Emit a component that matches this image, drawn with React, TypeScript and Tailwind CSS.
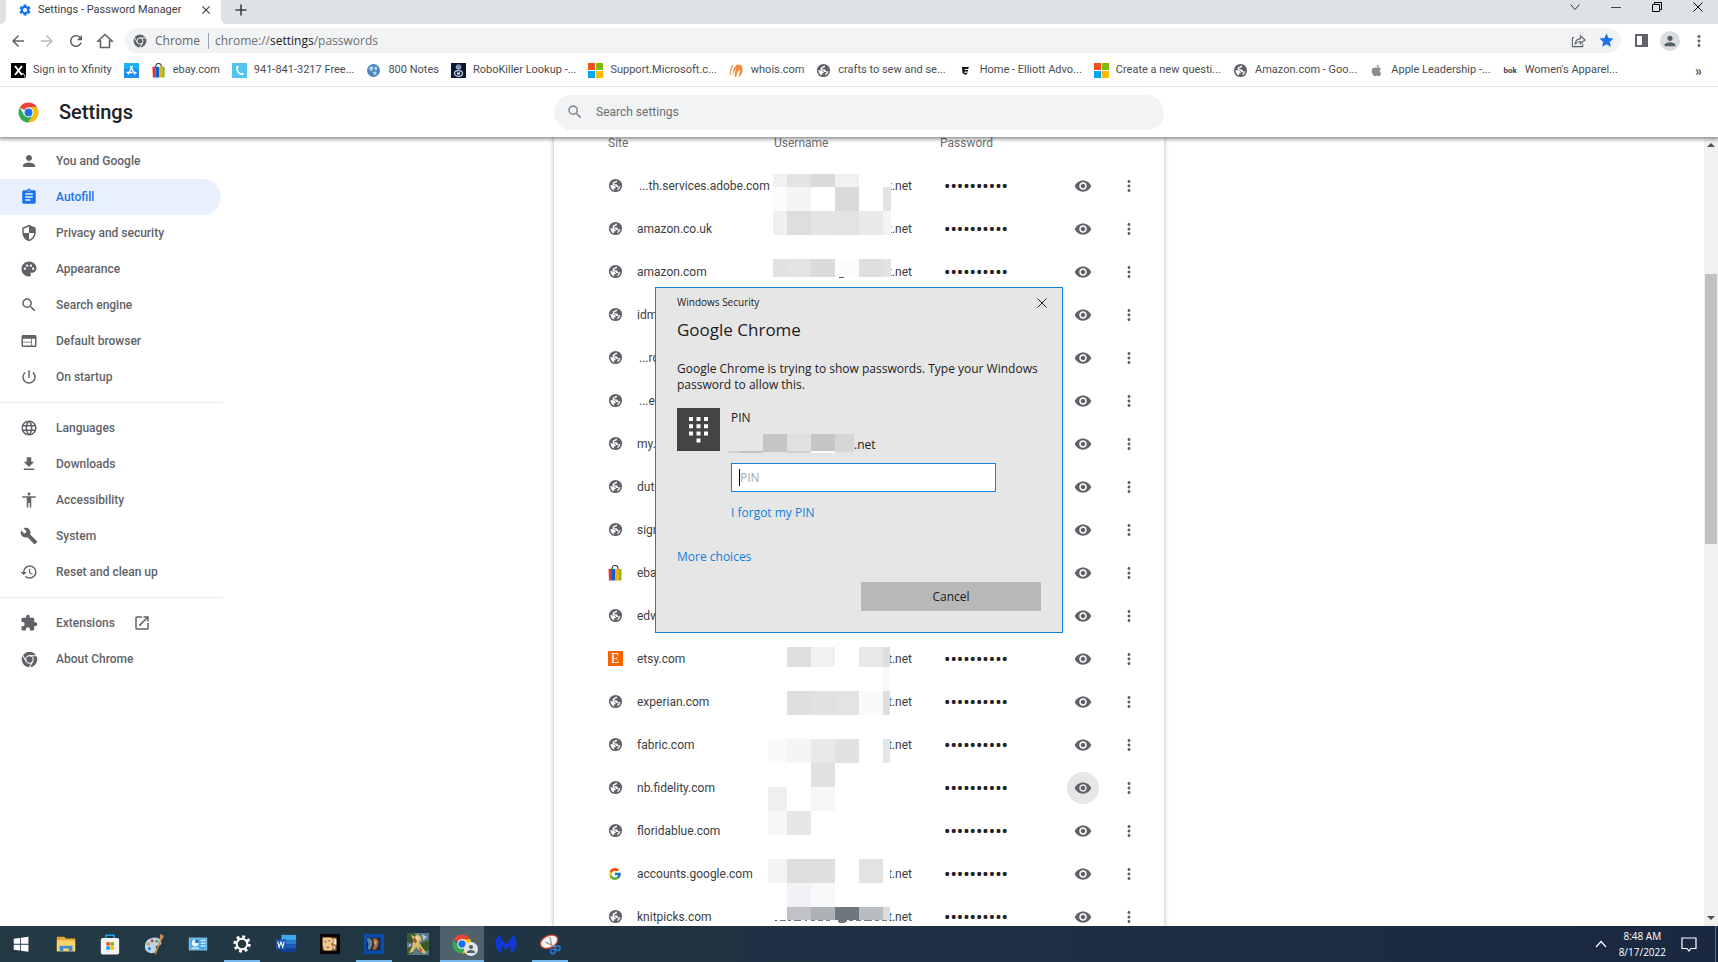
import type { ReactNode } from "react"
import {
  MdAccessibility, MdArrowBack, MdArrowForward, MdAssignment, MdBuild, MdClose, MdExtension,
  MdFileDownload, MdHistory, MdLanguage, MdMoreVert, MdOpenInNew, MdPalette, MdPerson,
  MdPowerSettingsNew, MdRefresh, MdSearch, MdSecurity, MdSettings, MdStar,
  MdVisibility, MdWeb,
} from "react-icons/md"
import { FaApple } from "react-icons/fa"
import { FcGoogle } from "react-icons/fc"

// ---------- icons ----------

function ChromeLogo({ className }: { className?: string }) {
  return (
    <svg viewBox="0 0 48 48" className={className} aria-hidden="true">
      <path d="M24 24 4.1 12.6A23 23 0 0 1 43.9 12.5H24z" fill="#ea4335" />
      <path d="M4.1 12.6A23 23 0 0 0 24 47l10-17.2-10-5.8-10 5.8z" fill="#34a853" />
      <path d="M43.9 12.5A23 23 0 0 1 24 47l10-17.2L24 12.5z" fill="#fbbc05" />
      <circle cx="24" cy="24" r="11.5" fill="#fff" />
      <circle cx="24" cy="24" r="9" fill="#1a73e8" />
    </svg>
  )
}

function ChromeMono({ className }: { className?: string }) {
  return (
    <svg viewBox="0 0 48 48" className={className} aria-hidden="true">
      <circle cx="24" cy="24" r="22" fill="currentColor" />
      <circle cx="24" cy="24" r="10.5" fill="none" stroke="#fff" strokeWidth="3" />
      <path d="M24 13.500h20M15 29.500 5 12.500M33 29.500 23 46.500" stroke="#fff" strokeWidth="3" fill="none" />
    </svg>
  )
}

function Globe({ className }: { className?: string }) {
  return (
    <svg viewBox="0 0 16 16" className={className} aria-hidden="true">
      <circle cx="8" cy="8" r="7" fill="#5f6368" />
      <path d="M2.600 7.400 6.500 8l1.800 1.500-.300 1.300-1.700.400.200 2.200Q2.800 12 2.600 7.400z" fill="#fff" />
      <path d="M8.600 2.700 9.800 3.400 9 4.900 6.800 5.300l-.2 1.300 3.100.4 1.200 2 2.400-.2Q12.800 12 9.800 13.100l.4-1.800 1.700-1.100-2.900-.6L7.600 8 5 7.400l.1-2.600 2-.8z" fill="#fff" />
    </svg>
  )
}

function EbayBag({ className }: { className?: string }) {
  return (
    <svg viewBox="0 0 16 16" className={className} aria-hidden="true">
      <path d="M5 5V3.500a3 3 0 0 1 6 0V5" fill="none" stroke="#444" strokeWidth="1.200" />
      <path d="M1.500 4H5v11.500H2z" fill="#e53238" />
      <path d="M5 4h3.500v11.500H5z" fill="#0064d2" />
      <path d="M8.500 4H12v11.500H8.500z" fill="#f5af02" />
      <path d="M12 4h2.500v11.500H12z" fill="#86b817" />
    </svg>
  )
}

function MsLogo({ className }: { className?: string }) {
  return (
    <svg viewBox="0 0 15 15" className={className} aria-hidden="true">
      <path d="M0 0h7v7H0z" fill="#f25022" />
      <path d="M8 0h7v7H8z" fill="#7fba00" />
      <path d="M0 8h7v7H0z" fill="#00a4ef" />
      <path d="M8 8h7v7H8z" fill="#ffb900" />
    </svg>
  )
}

function XfinityIcon() {
  return (
    <svg viewBox="0 0 15 15" className="size-[15px]" aria-hidden="true">
      <path d="M0 0h15v15H0z" fill="#000" />
      <path d="M4 3l7 9M11 3l-7 9" stroke="#fff" strokeWidth="2" />
      <path d="M9 10.500h3.500L14.500 15" stroke="#fff" strokeWidth=".8" fill="none" />
    </svg>
  )
}

function AppStoreIcon() {
  return (
    <svg viewBox="0 0 15 15" className="size-[15px]" aria-hidden="true">
      <path d="M0 0h15v15H0z" fill="#1d8df3" />
      <path d="M0 0h15v6H0z" fill="#1db1f8" />
      <path d="M8.500 3 4 11.500M6.500 3 11 11.500M2.500 9.500h6M10 9.500h2.500" stroke="#fff" strokeWidth="1.400" />
    </svg>
  )
}

function PhoneIcon() {
  return (
    <svg viewBox="0 0 15 15" className="size-[15px]" aria-hidden="true">
      <path d="M0 0h15v15H0z" fill="#55c3f0" />
      <path d="M5 3.500C4 7.500 6.500 11 10.500 11.800" stroke="#fff" strokeWidth="1.600" fill="none" />
      <path d="M4.500 3h2v2.500h-2zM9 10h2.500v2H9z" fill="#fff" />
    </svg>
  )
}

function NotesIcon() {
  return (
    <svg viewBox="0 0 15 15" className="size-[15px]" aria-hidden="true">
      <circle cx="7.500" cy="7.500" r="6.500" fill="#4a86bd" />
      <path d="M3 4.500 6 3l1.500 2L6 8 3.500 7zM8.500 3.500l3 1-1 3-2-1zM6.500 9l3-.500 1.500 1.500-2.500 2.500z" fill="#b7d6ef" />
    </svg>
  )
}

function RoboIcon() {
  return (
    <svg viewBox="0 0 15 15" className="size-[15px]" aria-hidden="true">
      <path d="M0 0h15v15H0z" fill="#0c1633" />
      <path d="M5.500 2.500h4v3.500h-4z" fill="#7f95b8" />
      <circle cx="7.500" cy="4" r="2.300" fill="none" stroke="#b9cbe4" strokeWidth=".8" />
      <ellipse cx="7.500" cy="10.500" rx="4" ry="2.800" fill="none" stroke="#b9cbe4" strokeWidth="1.300" />
      <path d="M6 9.500h3v2H6z" fill="#e6eefa" />
    </svg>
  )
}

function WhoisIcon() {
  return (
    <svg viewBox="0 0 15 15" className="size-[15px]" aria-hidden="true">
      <path d="M1.500 12Q1 6 4 2" stroke="#f0a050" strokeWidth="1.300" fill="none" />
      <path d="M3.500 13Q4 4 8 1.500L12 2q2.500 4 1 8-1 3-4 4 2.500-4 1.500-7Q8 8 7.500 13q-1 1.500-2 .5Q6 8 7.500 5 5 8 3.500 13z" fill="#f08a3c" />
    </svg>
  )
}

function ShieldE() {
  return (
    <svg viewBox="0 0 15 15" className="size-[15px]" aria-hidden="true">
      <path d="M4 4h7l-1 2H6.500v1H10v1.500H6.500V10l3.500-.500-2.500 2.500L4.500 10z" fill="#111" />
    </svg>
  )
}

// ---------- data ----------

interface Bookmark {
  label: string
  icon: ReactNode
}

const globe = <Globe className="size-[15px]" />

const bookmarks: Bookmark[] = [
  { label: "Sign in to Xfinity", icon: <XfinityIcon /> },
  { label: "", icon: <AppStoreIcon /> },
  { label: "ebay.com", icon: <EbayBag className="size-[15px]" /> },
  { label: "941-841-3217 Free...", icon: <PhoneIcon /> },
  { label: "800 Notes", icon: <NotesIcon /> },
  { label: "RoboKiller Lookup -...", icon: <RoboIcon /> },
  { label: "Support.Microsoft.c...", icon: <MsLogo className="size-[15px]" /> },
  { label: "whois.com", icon: <WhoisIcon /> },
  { label: "crafts to sew and se...", icon: globe },
  { label: "Home - Elliott Advo...", icon: <ShieldE /> },
  { label: "Create a new questi...", icon: <MsLogo className="size-[15px]" /> },
  { label: "Amazon.com - Goo...", icon: globe },
  { label: "Apple Leadership -...", icon: <FaApple className="size-[13px] text-[#8a8d91]" /> },
  { label: "Women's Apparel...", icon: <span className="text-[8px] font-bold text-gray-700">bok</span> },
]

const menuIcon = "size-[18px]"

const menuGroups = [
  [
    { label: "You and Google", icon: <MdPerson className={menuIcon} /> },
    { label: "Autofill", icon: <MdAssignment className={menuIcon} />, active: true },
    { label: "Privacy and security", icon: <MdSecurity className={menuIcon} /> },
    { label: "Appearance", icon: <MdPalette className={menuIcon} /> },
    { label: "Search engine", icon: <MdSearch className={menuIcon} /> },
    { label: "Default browser", icon: <MdWeb className={menuIcon} /> },
    { label: "On startup", icon: <MdPowerSettingsNew className={menuIcon} /> },
  ],
  [
    { label: "Languages", icon: <MdLanguage className={menuIcon} /> },
    { label: "Downloads", icon: <MdFileDownload className={menuIcon} /> },
    { label: "Accessibility", icon: <MdAccessibility className={menuIcon} /> },
    { label: "System", icon: <MdBuild className={menuIcon} /> },
    { label: "Reset and clean up", icon: <MdHistory className={menuIcon} /> },
  ],
  [
    { label: "Extensions", icon: <MdExtension className={menuIcon} />, external: true },
    { label: "About Chrome", icon: <ChromeMono className="size-[17px]" /> },
  ],
]

const siteGlobe = <Globe className="size-[15px]" />
const etsy = (
  <span className="flex size-[15px] items-center justify-center bg-[#f56400] font-['Liberation_Serif',serif] text-sm text-white">E</span>
)

const rows = [
  { site: "...th.services.adobe.com", user: "t.net" },
  { site: "amazon.co.uk", user: "t.net" },
  { site: "amazon.com", user: "t.net" },
  { site: "idm", user: "" },
  { site: "...ro", user: "" },
  { site: "...er", user: "" },
  { site: "my.", user: "" },
  { site: "dutc", user: "" },
  { site: "sign", user: "" },
  { site: "eba", user: "", icon: <EbayBag className="size-4" /> },
  { site: "edw", user: "" },
  { site: "etsy.com", user: "t.net", icon: etsy },
  { site: "experian.com", user: "t.net" },
  { site: "fabric.com", user: "t.net" },
  { site: "nb.fidelity.com", user: "", hover: true },
  { site: "floridablue.com", user: "" },
  { site: "accounts.google.com", user: "t.net", icon: <FcGoogle className="size-[14px]" /> },
  { site: "knitpicks.com", user: "t.net" },
]

// x, y, width, height, fill
type Block = [number, number, number, number, string]

const topBlocks: Block[] = [
  [5, 0, 14, 13, "#f1f1f1"], [19, 0, 24, 13, "#e3e3e3"], [43, 0, 24, 13, "#dadada"], [67, 0, 24, 13, "#f1f1f1"],
  [118, 0, 5, 13, "#ffffff"],
  [5, 13, 14, 24, "#fcfcfc"], [19, 13, 24, 24, "#f5f5f5"], [67, 13, 24, 24, "#dadada"], [115, 13, 8, 24, "#e3e3e3"],
  [5, 37, 14, 24, "#f0f0f0"], [19, 37, 24, 24, "#dedede"], [43, 37, 24, 24, "#e4e4e4"], [67, 37, 24, 24, "#e3e3e3"],
  [91, 37, 24, 24, "#e9e9e9"], [115, 37, 8, 24, "#f4f4f4"],
  [5, 85, 14, 18, "#e2e2e2"], [19, 85, 24, 18, "#e4e4e4"], [43, 85, 24, 18, "#dbdbdb"], [67, 85, 24, 18, "#fcfcfc"],
  [91, 85, 24, 18, "#dfdfdf"], [115, 85, 8, 18, "#e3e3e3"], [71, 103, 5, 1, "#555555"],
]

const bottomBlocks: Block[] = [
  [19, 0, 24, 20, "#dfdfdf"], [43, 0, 24, 20, "#f1f1f1"], [91, 0, 24, 20, "#e8e8e8"], [115, 0, 7, 20, "#dedede"],
  [115, 20, 7, 24, "#f9f9f9"],
  [19, 44, 24, 24, "#dfdfdf"], [43, 44, 24, 24, "#e1e1e1"], [67, 44, 24, 24, "#e3e3e3"], [91, 44, 24, 24, "#fafafa"],
  [115, 44, 7, 24, "#dfdfdf"],
  [0, 92, 19, 24, "#fafafa"], [19, 92, 24, 24, "#f5f5f5"], [43, 92, 24, 24, "#e9e9e9"], [67, 92, 24, 24, "#e2e2e2"],
  [115, 92, 7, 24, "#e6e6e6"],
  [43, 116, 24, 24, "#e1e1e1"],
  [0, 140, 19, 24, "#eef0f0"], [43, 140, 24, 24, "#f6f8f8"],
  [0, 164, 19, 24, "#f6f8f8"], [19, 164, 24, 24, "#e6e6e6"],
  [0, 212, 19, 24, "#f4f4f4"], [19, 212, 48, 24, "#dfdfdf"], [91, 212, 24, 24, "#e3e3e3"],
  [115, 212, 7, 24, "#ffffff"],
  [19, 236, 24, 24, "#f1f2f5"], [43, 236, 24, 24, "#f7f8f8"],
  [19, 260, 24, 13, "#c0c2c8"], [43, 260, 24, 13, "#adb1b4"], [67, 260, 24, 13, "#6d777f"], [91, 260, 24, 13, "#b9bdc0"],
  [115, 260, 7, 13, "#dcdcdc"],
  [7, 273, 2, 1, "#555555"], [12, 273, 6, 1, "#777777"], [20, 273, 3, 1, "#777777"], [26, 273, 7, 1, "#777777"],
  [37, 273, 2, 1, "#777777"], [43, 273, 4, 1, "#777777"], [50, 273, 5, 1, "#777777"], [58, 273, 4, 1, "#777777"],
  [70, 273, 9, 2, "#777777"], [71, 275, 6, 1, "#777777"], [81, 273, 4, 1, "#777777"], [88, 273, 5, 1, "#777777"],
  [96, 273, 8, 1, "#777777"], [107, 273, 4, 1, "#777777"], [114, 273, 5, 1, "#777777"],
]

const pinBlocks: Block[] = [
  [0, 17, 11, 2, "#d4d4d4"], [11, 17, 24, 2, "#c4c4c4"], [35, 0, 24, 18, "#c5c5c5"], [35, 18, 24, 1, "#dfe3e6"],
  [59, 0, 24, 17, "#e1e1e1"], [59, 17, 24, 2, "#d0d0d0"], [83, 0, 24, 17, "#c5c5c5"], [83, 17, 24, 2, "#ffffff"],
  [107, 0, 19, 18, "#d6d6d6"], [107, 18, 19, 1, "#dfe3e6"],
]

function Mosaic({ blocks, className }: { blocks: Block[]; className: string }) {
  return (
    <svg className={className} shapeRendering="crispEdges" aria-hidden="true">
      {blocks.map(([x, y, w, h, fill]) => (
        <rect key={`${x}-${y}`} x={x} y={y} width={w} height={h} fill={fill} />
      ))}
    </svg>
  )
}

// ---------- browser chrome ----------

function TabStrip() {
  return (
    <div className="flex h-6 items-stretch bg-white text-[#3c4043]">
      <div className="w-1.5 rounded-br-md bg-[#dee1e6]" />
      <div className="flex w-[215px] items-start pl-3 pr-2">
        <div className="flex h-5 w-full items-center">
          <MdSettings className="size-[14px] shrink-0 text-[#1a73e8]" />
          <span className="ml-1.5 flex-1 whitespace-nowrap font-['Roboto',sans-serif] text-[11px]">Settings - Password Manager</span>
          <button aria-label="Close tab"><MdClose className="size-3.5" /></button>
        </div>
      </div>
      <div className="flex flex-1 items-start rounded-bl-md bg-[#dee1e6]">
        <button aria-label="New tab" className="ml-3 flex h-5 w-4 items-center justify-center">
          <svg viewBox="0 0 12 12" className="size-3" stroke="currentColor" strokeWidth="1.600"><path d="M6 .500v11M.500 6h11" /></svg>
        </button>
        <div className="ml-auto flex h-[14px] items-center text-black">
          <button aria-label="Search tabs" className="flex w-[41px] justify-center">
            <svg viewBox="0 0 10 10" className="size-[10px]" fill="none" stroke="#333"><path d="M.500 2.500 5 7.500l4.500-5" /></svg>
          </button>
          <button aria-label="Minimize" className="flex w-[41px] justify-center">
            <svg viewBox="0 0 10 10" className="size-[10px]" stroke="#444"><path d="M0 5.500h10" /></svg>
          </button>
          <button aria-label="Restore" className="flex w-[41px] justify-center">
            <svg viewBox="0 0 10 10" className="size-[10px]" fill="none" stroke="#000"><path d="M.500 2.500h7v7h-7zM2.500 2.500v-2h7v7h-2" /></svg>
          </button>
          <button aria-label="Close" className="flex w-[41px] justify-center">
            <svg viewBox="0 0 10 10" className="size-[10px]" stroke="#000"><path d="m.500.500 9 9M9.500.500l-9 9" /></svg>
          </button>
        </div>
      </div>
    </div>
  )
}

function Toolbar() {
  return (
    <div className="flex h-[33px] items-center pr-2.5 text-[#5f6368]">
      <div className="flex w-[125px] shrink-0 gap-[11px] pl-[9px]">
        <button aria-label="Back"><MdArrowBack className="size-[18px]" /></button>
        <button aria-label="Forward" className="text-[#babcbe]"><MdArrowForward className="size-[18px]" /></button>
        <button aria-label="Reload"><MdRefresh className="size-[18px]" /></button>
        <button aria-label="Home">
          <svg viewBox="0 0 18 18" className="size-[18px]" fill="none" stroke="currentColor" strokeWidth="1.600">
            <path d="M2 9 9 2.500 16 9h-2.500v6.500h-9V9z" />
          </svg>
        </button>
      </div>
      <div className="flex h-[25px] flex-1 items-center rounded-full bg-[#f1f3f4] pl-2 pr-1.5">
        <ChromeMono className="size-[14px] shrink-0" />
        <span className="ml-2 text-xs text-[#6b6f73]">Chrome</span>
        <span className="ml-2 mr-1.5 h-4 w-px bg-[#9aa0a6]" />
        <span className="font-['Open_Sans',sans-serif] text-xs text-[#6b6f73]">chrome://<span className="text-[#202124]">settings</span>/passwords</span>
        <button aria-label="Share this page" className="ml-auto">
          <svg viewBox="0 0 16 16" className="size-[15px]" fill="none" stroke="currentColor" strokeWidth="1.200">
            <path d="M3.500 5h-2v9.500h11V12M4.500 11.500Q5 6.500 10 6V3l5 4.500-5 4V9Q6.500 9 4.500 11.500z" />
          </svg>
        </button>
        <button aria-label="Bookmark this tab" className="ml-3 text-[#1a73e8]"><MdStar className="size-[17px]" /></button>
      </div>
      <button aria-label="Side panel" className="ml-3.5">
        <svg viewBox="0 0 13 13" className="size-[13px]"><path d="M0 0h13v13H0zM2 2v9h5V2z" fill="currentColor" fillRule="evenodd" /></svg>
      </button>
      <button aria-label="Profile" className="ml-3 flex size-5 items-center justify-center rounded-full bg-[#dadce0]">
        <MdPerson className="size-4 text-[#4f6068]" />
      </button>
      <button aria-label="Menu" className="ml-2.5"><MdMoreVert className="size-[18px]" /></button>
    </div>
  )
}

function BookmarksBar() {
  return (
    <div className="flex h-[30px] items-center gap-3 border-b border-[#e3e5e8] pb-0.5 pl-[11px] pr-4 font-['Roboto',sans-serif] text-[11px] text-[#4a4d51]">
      {bookmarks.map((b, i) => (
        <a key={i} href="#" aria-label={b.label || "App Store"} className="flex items-center gap-[7px] whitespace-nowrap">
          <span className="flex w-[15px] shrink-0 justify-center">{b.icon}</span>
          {b.label}
        </a>
      ))}
      <button aria-label="More bookmarks" className="ml-auto text-sm font-semibold">»</button>
    </div>
  )
}

// ---------- settings page ----------

function SettingsHeader() {
  return (
    <header className="relative z-10 flex h-[50px] items-center bg-white shadow-[0_1px_4px_1px_rgba(0,0,0,0.45)]">
      <div className="flex-1">
        <div className="flex items-center pl-[18px]">
          <ChromeLogo className="size-[21px]" />
          <h1 className="ml-5 text-xl font-medium text-[#202124]">Settings</h1>
        </div>
      </div>
      <label className="flex h-[35px] w-[610px] items-center rounded-full bg-[#f1f3f4] pl-3">
        <MdSearch className="size-[18px] text-[#80868b]" aria-hidden="true" />
        <input
          type="text"
          placeholder="Search settings"
          aria-label="Search settings"
          className="ml-3 flex-1 bg-transparent text-xs outline-none placeholder:text-[#6b6f73]"
        />
      </label>
      <div className="flex-1" />
    </header>
  )
}

function Sidebar() {
  return (
    <nav className="w-[223px] pt-1.5 text-xs font-medium text-[#5f6368]">
      {menuGroups.map((group, g) => (
        <ul key={g} className={g > 0 ? "mt-[7px] border-t border-[#e8eaed] pt-[7px]" : ""}>
          {group.map((item: any) => (
            <li key={item.label}>
              <a
                href="#"
                className={`flex h-9 w-[221px] items-center rounded-r-full pl-5 ${item.active ? "bg-[#e8f0fe] text-[#1a73e8]" : ""}`}
              >
                <span className="flex w-[18px] justify-center">{item.icon}</span>
                <span className="ml-[18px]">{item.label}</span>
                {item.external && <MdOpenInNew className="ml-[18px] size-[18px]" />}
              </a>
            </li>
          ))}
        </ul>
      ))}
    </nav>
  )
}

function PasswordTable() {
  return (
    <main className="relative w-[610px] shrink-0 bg-white pl-[53px] shadow-[0_0_4px_1px_rgba(0,0,0,0.22)]">
      <table className="w-full table-fixed text-left text-xs text-[#3c4043]">
        <colgroup>
          <col className="w-[167px]" />
          <col className="w-[166px]" />
          <col className="w-[127px]" />
          <col className="w-[46px]" />
          <col />
        </colgroup>
        <thead>
          <tr className="h-[27px] align-top leading-3 text-[#6b6f73]">
            <th className="pl-px font-normal">Site</th>
            <th className="font-normal">Username</th>
            <th className="font-normal">Password</th>
            <th />
            <th />
          </tr>
        </thead>
        <tbody>
          {rows.map((row) => (
            <tr key={row.site} className="h-[43px]">
              <td>
                <span className="flex items-center whitespace-nowrap">
                  <span className="flex w-4 shrink-0 justify-center">{row.icon ?? siteGlobe}</span>
                  <span className={row.site.startsWith("...") ? "ml-4" : "ml-3.5"}>{row.site}</span>
                </span>
              </td>
              <td className="pl-[114px]">{row.user}</td>
              <td className="pl-1 font-['Noto_Sans',sans-serif] text-[17px] leading-4 text-[#202124]">••••••••••</td>
              <td>
                <button
                  aria-label="Show password"
                  className={`flex size-8 items-center justify-center rounded-full text-[#5f6368] ${row.hover ? "bg-[#e6e6e6]" : ""}`}
                >
                  <MdVisibility className="size-[18px]" />
                </button>
              </td>
              <td>
                <button aria-label="More actions" className="flex size-8 items-center justify-center text-[#5f6368]">
                  <MdMoreVert className="size-[18px]" />
                </button>
              </td>
            </tr>
          ))}
        </tbody>
      </table>
      <Mosaic blocks={topBlocks} className="absolute left-[214px] top-[37px] h-[110px] w-[130px]" />
      <Mosaic blocks={bottomBlocks} className="absolute left-[214px] top-[510px] h-[280px] w-[130px]" />
    </main>
  )
}

function Scrollbar() {
  return (
    <div className="flex h-full w-[14px] flex-col items-center bg-[#f1f1f1]" aria-hidden="true">
      <svg viewBox="0 0 8 4" className="mt-1.5 h-1 w-2"><path d="M0 4h8L4 0z" fill="#505050" /></svg>
      <div className="mt-[127px] h-[270px] w-3 bg-[#c1c1c1]" />
      <svg viewBox="0 0 8 4" className="mb-1.5 mt-auto h-1 w-2"><path d="M0 0h8L4 4z" fill="#505050" /></svg>
    </div>
  )
}

// ---------- windows security prompt ----------

function SecurityDialog() {
  return (
    <div
      role="dialog"
      aria-label="Windows Security"
      className="absolute left-1/2 top-[287px] z-20 flex h-[346px] w-[408px] -translate-x-1/2 flex-col border border-[#0f7fd8] bg-[#e6e6e6] px-[21px] font-['Open_Sans','Noto_Sans',sans-serif] text-xs text-[#1c1c1c]"
    >
      <div className="flex h-[29px] items-center justify-between text-[10px]">
        <span>Windows Security</span>
        <button aria-label="Close" className="-mr-1.5">
          <svg viewBox="0 0 10 10" className="size-[10px]" stroke="#222"><path d="m.500.500 9 9M9.500.500l-9 9" /></svg>
        </button>
      </div>
      <h2 className="self-start text-[17px] leading-[26px]">Google Chrome</h2>
      <p className="mt-[18px] whitespace-nowrap leading-4">
        Google Chrome is trying to show passwords. Type your Windows
        <br />
        password to allow this.
      </p>
      <div className="mt-[15px] flex">
        <div className="flex size-[43px] shrink-0 items-center justify-center bg-[#444]">
          <svg viewBox="0 0 19 26" className="h-[26px] w-[19px]" fill="#fff" aria-hidden="true">
            <path d="M0 0h4v4H0zM7.500 0h4v4h-4zM15 0h4v4h-4zM0 7.200h4v4H0zM7.500 7.200h4v4h-4zM15 7.200h4v4h-4zM0 14.400h4v4H0zM7.500 14.400h4v4h-4zM15 14.400h4v4h-4zM7.500 21.600h4v4h-4z" />
          </svg>
        </div>
        <div className="ml-[11px]">
          <label htmlFor="pin" className="block leading-5">PIN</label>
          <div className="relative mt-2 h-[18px] pl-[123px] leading-[18px]">
            .net
            <Mosaic blocks={pinBlocks} className="absolute -left-[3px] -top-0.5 h-5 w-[126px]" />
          </div>
          <div className="relative mt-[9px]">
            <input
              id="pin"
              type="password"
              placeholder="PIN"
              className="block h-[29px] w-[265px] border border-[#1a82d8] bg-white px-2 text-xs outline-none placeholder:text-[#a9a9a9]"
            />
            <span className="absolute left-2 top-1.5 h-[17px] w-px bg-black" />
          </div>
          <a href="#" className="mt-3 block leading-[18px] text-[#1080dc]">I forgot my PIN</a>
        </div>
      </div>
      <a href="#" className="mt-[26px] self-start leading-[18px] text-[#1080dc]">More choices</a>
      <button className="mb-[21px] mt-auto h-[29px] w-[180px] self-end bg-[#b8b8b8]">Cancel</button>
    </div>
  )
}

// ---------- taskbar ----------

const taskIcons = [
  {
    label: "Start",
    art: <path d="M3 6.300 9.800 5.400v6.400H3zM10.700 5.200 19 4v7.800h-8.300zM3 12.700h6.800v6.400L3 18.200zM10.700 12.700H19v7.800l-8.300-1.200z" fill="#fff" />,
  },
  {
    label: "File Explorer",
    art: (
      <>
        <path d="M2 4h8l2 2h10v14H2z" fill="#e8a82e" />
        <path d="M2 8h20v12H2z" fill="#fbd36b" />
        <path d="M5 20v-6h14v6h-4v-3H9v3z" fill="#3d8edb" />
      </>
    ),
  },
  {
    label: "Microsoft Store",
    art: (
      <>
        <path d="M7.500 7V2.500h9V7" fill="none" stroke="#1ba1f2" strokeWidth="1.800" />
        <rect x="2" y="5.500" width="20" height="18" rx="2" fill="#f3f3f3" />
        <path d="M8 10h3.800v3.800H8z" fill="#f25022" />
        <path d="M12.500 10h3.800v3.800h-3.800z" fill="#7fba00" />
        <path d="M8 14.500h3.800v3.800H8z" fill="#00a4ef" />
        <path d="M12.500 14.500h3.800v3.800h-3.800z" fill="#ffb900" />
      </>
    ),
  },
  {
    label: "Paint",
    art: (
      <>
        <path d="M2 15Q2 6 12 5q8 0 8 6 0 3-5 3-2 1-.5 4Q14 22 9 22 2 21 2 15z" fill="#b8d8f0" />
        <circle cx="6" cy="12" r="1.800" fill="#e5a23a" />
        <circle cx="10" cy="8.500" r="1.800" fill="#d9433a" />
        <circle cx="7" cy="17" r="1.800" fill="#3f7fd0" />
        <circle cx="15" cy="9" r="1.600" fill="#5aa845" />
        <path d="M13 23 20 6" stroke="#d98a3d" strokeWidth="1.800" />
        <path d="m18 6 1-5 4 2-2.500 4.500z" fill="#c58a5c" />
      </>
    ),
  },
  {
    label: "Control Panel",
    art: (
      <>
        <path d="M2 5h20v14H2z" fill="#8ccdf4" />
        <path d="M3 6h18v12H3z" fill="#4aa8e8" />
        <circle cx="9" cy="11" r="3.800" fill="#e8f5fd" />
        <path d="M9 11V7.200A3.800 3.800 0 0 1 12.800 11z" fill="#1f6fc0" />
        <path d="M15 8h5M15 11h5M15 14h5M5 16.500h8" stroke="#e8f5fd" strokeWidth="1.300" />
      </>
    ),
  },
  {
    label: "Settings",
    running: true,
    art: (
      <>
        <circle cx="12" cy="12" r="8" fill="none" stroke="#fff" strokeWidth="3" strokeDasharray="3.140 3.140" />
        <circle cx="12" cy="12" r="5.800" fill="none" stroke="#fff" strokeWidth="2.200" />
      </>
    ),
  },
  {
    label: "Word",
    art: (
      <>
        <path d="M7 2h16v6H7z" fill="#41a5ee" />
        <path d="M7 8h16v4.500H7z" fill="#2b7cd3" />
        <path d="M7 12.500h16V17H7z" fill="#185abd" />
        <path d="M7 17h16v4H7z" fill="#103f91" />
        <path d="M1 7h11v11H1z" fill="#1b56ae" />
        <path d="m3 9.500 1.500 6 2-5.500 2 5.500 1.500-6" fill="none" stroke="#fff" strokeWidth="1.200" />
      </>
    ),
  },
  {
    label: "Portrait game",
    art: (
      <>
        <path d="M1 1h22v22H1z" fill="#080604" />
        <path d="M4 5h15v14H4z" fill="#a9713d" />
        <path d="M4 5h9q3 2 2 5l-2 2 2 3-1 4H6q-2-3-2-7z" fill="#edc58e" />
        <path d="M6 9h2v1H6zM10 8h2v1h-2zM8 15h3v1H8z" fill="#8a5a2e" />
        <path d="m16 6 3 1v6l-3-1zM15 14l3 1-1 3z" fill="#f7e3bf" />
      </>
    ),
  },
  {
    label: "Puzzle game",
    running: true,
    art: (
      <>
        <path d="M1 1h22v22H1z" fill="#0a4bab" />
        <path d="M4 5h15v14H4z" fill="#1d2a3a" />
        <path d="M4 6q5-1 6 3v4l-2 5H5l1-6z" fill="#5f86a3" />
        <path d="M11 6q5-1 6 4 0 5-3 8h-4l2-5z" fill="#a9683b" />
        <path d="m12 8 3 1-1 4-2-1z" fill="#d79a5e" />
      </>
    ),
  },
  {
    label: "Adventure game",
    art: (
      <>
        <path d="M0 0h24v24H0z" fill="#5b7a86" />
        <path d="M0 0h8l2 6-5 5-5-1zM15 11l9-3v10l-6 4zM0 16l6-2 1 8-7 2z" fill="#3b5a2c" />
        <path d="m4 2 5 2 2-3 4 3 1 4-3 2 3 5 5 6-2 2-6-4-3-4-4 6-4 1 4-8 1-6z" fill="#d9bd68" />
        <path d="m7 5 4 2-1 4-3-1zM13 15l4 4-3 2z" fill="#a84f2c" />
        <path d="m10 3 3 2-1 3-2-1z" fill="#f3e2b4" />
        <path d="m16 1 6 3-4 4zM2 12l3 1-3 3z" fill="#a9cbd8" />
      </>
    ),
  },
  { label: "Google Chrome", running: true, active: true, art: null },
  {
    label: "Malwarebytes",
    art: <path d="M4.500 2Q6 6.500 12 12.500 18 6.500 19.500 2q5.500 6 3.500 12.500-1.500 5-5 7.500-2-3-1-8.500L12 18l-5-4.500q1 5.500-1 8.500-3.500-2.500-5-7.500Q-1 8 4.500 2z" fill="#1038d8" />,
  },
  {
    label: "Snipping Tool",
    running: true,
    art: (
      <>
        <ellipse cx="11" cy="9.500" rx="10" ry="6.500" transform="rotate(-25 11 9.500)" fill="#f3f3f3" stroke="#c9452f" strokeWidth="1.400" />
        <path d="m12 4 2 11M7 10l11 5" stroke="#9aa0a6" strokeWidth="1.500" />
        <circle cx="15" cy="20" r="2.500" fill="none" stroke="#2a76c6" strokeWidth="1.800" />
        <circle cx="20.500" cy="16.500" r="2.500" fill="none" stroke="#2a76c6" strokeWidth="1.800" />
      </>
    ),
  },
]

function Taskbar() {
  return (
    <footer className="flex h-9 shrink-0 items-stretch bg-linear-to-r from-[#233a44] to-[#1a2840] font-['Open_Sans','Noto_Sans',sans-serif] text-white">
      <div className="flex">
        {taskIcons.map((t) => (
          <button
            key={t.label}
            aria-label={t.label}
            className={`flex w-11 flex-col items-center ${t.active ? "bg-[#4f626b]" : ""}`}
          >
            <span className="relative flex h-[34px] items-center pt-0.5">
              {t.art ? (
                <svg viewBox="0 0 24 24" className="size-[22px]">{t.art}</svg>
              ) : (
                <>
                  <ChromeLogo className="size-5" />
                  <span className="absolute -right-1.5 bottom-1 flex size-3.5 items-center justify-center rounded-full bg-[#dfe3e8]">
                    <MdPerson className="size-3 text-[#4f6068]" />
                  </span>
                </>
              )}
            </span>
            {t.running && <span className={`h-0.5 bg-[#76b9ed] ${t.active ? "w-full" : "w-9"}`} />}
          </button>
        ))}
      </div>
      <div className="ml-auto flex items-center pr-0.5">
        <button aria-label="Show hidden icons" className="mr-3">
          <svg viewBox="0 0 12 12" className="size-3" fill="none" stroke="#fff" strokeWidth="1.200"><path d="m1 9 5-5.500L11 9" /></svg>
        </button>
        <div className="text-center text-[10px] leading-4">
          <div>8:48 AM</div>
          <div>8/17/2022</div>
        </div>
        <button aria-label="Notifications" className="ml-[15px] mr-[18px]">
          <svg viewBox="0 0 16 16" className="size-4" fill="none" stroke="#fff" strokeWidth="1.200"><path d="M1 2h14v10.500h-5L8 15l-2-2.500H1z" /></svg>
        </button>
        <span className="h-full w-px bg-[#5a6678]" />
      </div>
    </footer>
  )
}

export default function App() {
  return (
    <div className="relative flex h-screen flex-col overflow-hidden bg-white font-['Noto_Sans','Open_Sans',sans-serif]">
      <TabStrip />
      <Toolbar />
      <BookmarksBar />
      <div className="flex min-h-0 flex-1 flex-col overflow-hidden font-['Roboto',sans-serif]">
        <SettingsHeader />
        <div className="flex min-h-0 flex-1 overflow-hidden bg-white">
          <div className="flex-1">
            <Sidebar />
          </div>
          <PasswordTable />
          <div className="flex flex-1 justify-end">
            <Scrollbar />
          </div>
        </div>
      </div>
      <Taskbar />
      <SecurityDialog />
    </div>
  )
}
